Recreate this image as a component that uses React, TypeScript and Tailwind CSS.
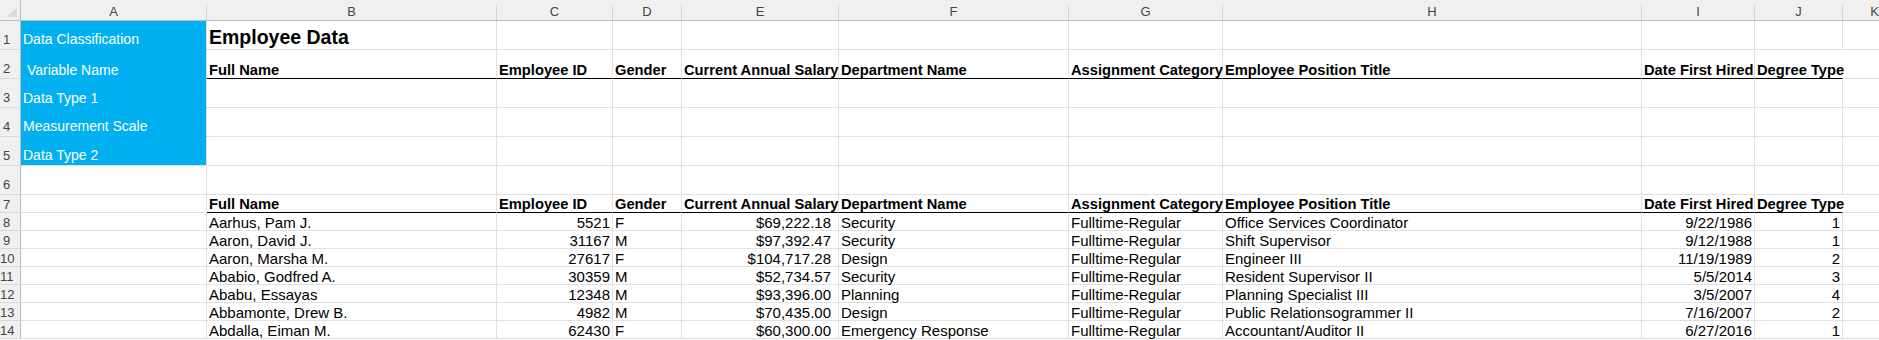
import React from 'react';
import clsx from 'clsx';

const letters = ['A', 'B', 'C', 'D', 'E', 'F', 'G', 'H', 'I', 'J', 'K'];

const headers = [
  'Full Name',
  'Employee ID',
  'Gender',
  'Current Annual Salary',
  'Department Name',
  'Assignment Category',
  'Employee Position Title',
  'Date First Hired',
  'Degree Type',
];

const employees = [
  ['Aarhus, Pam J.', '5521', 'F', '$69,222.18', 'Security', 'Fulltime-Regular', 'Office Services Coordinator', '9/22/1986', '1'],
  ['Aaron, David J.', '31167', 'M', '$97,392.47', 'Security', 'Fulltime-Regular', 'Shift Supervisor', '9/12/1988', '1'],
  ['Aaron, Marsha M.', '27617', 'F', '$104,717.28', 'Design', 'Fulltime-Regular', 'Engineer III', '11/19/1989', '2'],
  ['Ababio, Godfred A.', '30359', 'M', '$52,734.57', 'Security', 'Fulltime-Regular', 'Resident Supervisor II', '5/5/2014', '3'],
  ['Ababu, Essayas', '12348', 'M', '$93,396.00', 'Planning', 'Fulltime-Regular', 'Planning Specialist III', '3/5/2007', '4'],
  ['Abbamonte, Drew B.', '4982', 'M', '$70,435.00', 'Design', 'Fulltime-Regular', 'Public Relationsogrammer II', '7/16/2007', '2'],
  ['Abdalla, Eiman M.', '62430', 'F', '$60,300.00', 'Emergency Response', 'Fulltime-Regular', 'Accountant/Auditor II', '6/27/2016', '1'],
];

const classLabels = ['Data Classification', ' Variable Name', 'Data Type 1', 'Measurement Scale', 'Data Type 2'];
const labelPad = ['pb-[3px]', 'pb-[1px]', 'pb-[2px]', 'pb-[3px]', 'pb-[3px]'];

// columns B..J: which ones are right aligned numbers
const alignRight = [false, true, false, true, false, false, false, true, true];

function Cell({ children, className }: { children?: React.ReactNode; className?: string }) {
  return (
    <div className={clsx('flex items-end whitespace-nowrap border-r border-b border-[#e1e1e1] px-[2px]', className)}>
      {children}
    </div>
  );
}

function RowNum({ n, pad }: { n: number; pad: string }) {
  return (
    <div className={clsx('flex items-end bg-[#f0f0f0] border-r border-b border-r-[#bcbcbc] border-b-[#d9d9d9]', pad)}>
      <span className="w-[13px] text-center text-[13px] leading-[13px] text-[#444]">{n}</span>
    </div>
  );
}

function ColHead({ label }: { label: string }) {
  return (
    <div className="flex items-end bg-[#f0f0f0] border-b border-[#bcbcbc]">
      <span className="flex-1 pb-[2px] text-center text-[13px] leading-[13px] text-[#444]">{label}</span>
      <span className="h-[15px] w-px bg-[#d4d4d4]" />
    </div>
  );
}

function HeaderCells() {
  return (
    <>
      {headers.map((h, i) => (
        <Cell
          key={h}
          className={clsx(
            'border-b-black font-bold text-[14.7px] leading-[15px]',
            i === 8 && 'border-r-transparent'
          )}
        >
          {h}
        </Cell>
      ))}
      <Cell />
    </>
  );
}

export default function App() {
  return (
    <div className="h-[340px] w-[1879px] overflow-hidden bg-white font-['Liberation_Sans',Arial,sans-serif] text-black">
      <div className="grid w-[1908px] grid-cols-[21px_186px_290px_116px_69px_157px_230px_154px_419px_113px_88px_64px] grid-rows-[21px_repeat(6,29px)_repeat(8,18px)]">
        {/* column letters */}
        <div className="flex items-end justify-end bg-[#f0f0f0] border-r border-b border-[#bcbcbc] pb-[3px] pr-[3px]">
          <svg width="10" height="10" viewBox="0 0 10 10">
            <polygon points="10,0 10,10 0,10" fill="#dadada" />
          </svg>
        </div>
        {letters.map((l) => (
          <ColHead key={l} label={l} />
        ))}

        {/* rows 1-5: classification block */}
        {classLabels.map((label, r) => (
          <React.Fragment key={label}>
            <RowNum n={r + 1} pad="pb-[3px]" />
            <Cell
              className={clsx(
                'bg-[#00b0f0] text-[14px] leading-[14px] text-white whitespace-pre',
                labelPad[r],
                r < 4 && 'border-b-[#00b0f0]'
              )}
            >
              {label}
            </Cell>
            {r === 0 && (
              <>
                <Cell className="pb-[2px] text-[19.5px] leading-[20px] font-bold">Employee Data</Cell>
                {Array.from({ length: 9 }).map((_, i) => (
                  <Cell key={i} />
                ))}
              </>
            )}
            {r === 1 && <HeaderCells />}
            {r > 1 && Array.from({ length: 10 }).map((_, i) => <Cell key={i} />)}
          </React.Fragment>
        ))}

        {/* row 6 */}
        <RowNum n={6} pad="pb-[3px]" />
        {Array.from({ length: 11 }).map((_, i) => (
          <Cell key={i} />
        ))}

        {/* row 7 repeats the variable names */}
        <RowNum n={7} pad="pb-[1px]" />
        <Cell />
        <HeaderCells />

        {/* data rows */}
        {employees.map((emp, r) => (
          <React.Fragment key={emp[0]}>
            <RowNum n={r + 8} pad="pb-[1px]" />
            <Cell />
            {emp.map((v, i) => (
              <Cell
                key={i}
                className={clsx(
                  'text-[15px] leading-[15px]',
                  alignRight[i] && 'justify-end',
                  i === 3 && 'pr-[7px]'
                )}
              >
                {v}
              </Cell>
            ))}
            <Cell />
          </React.Fragment>
        ))}
      </div>
    </div>
  );
}
